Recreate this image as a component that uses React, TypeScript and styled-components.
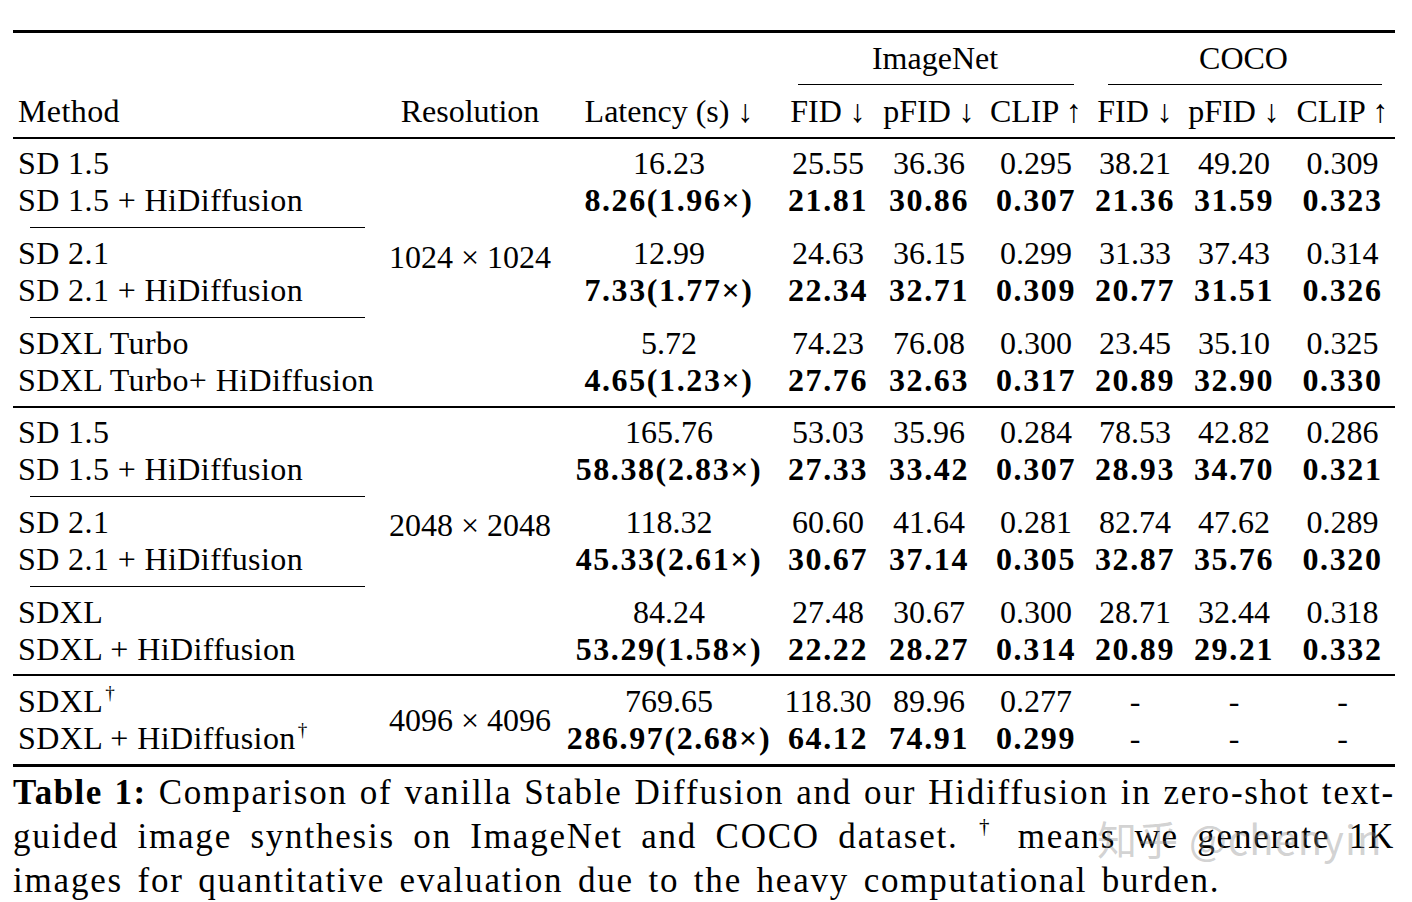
import React from 'react'
import styled, { createGlobalStyle } from 'styled-components'

const GlobalStyle = createGlobalStyle`
  body {
    margin: 0;
    background: #fff;
    color: #000;
    font-family: "Liberation Serif", "DejaVu Serif", serif;
  }
`

const COLS = '367px 180px 218px 100px 102px 112px 86px 112px 105px'

const Page = styled.main`
  position: relative;
  width: 1382px;
  margin: 30px 0 0 13px;
`

const Rule = styled.div<{ $weight: number }>`
  height: ${p => p.$weight}px;
  background: #000;
`

const Grid = styled.div<{ $top: number; $bottom: number; $rows: string }>`
  display: grid;
  grid-template-columns: ${COLS};
  grid-template-rows: ${p => p.$rows};
  padding: ${p => p.$top}px 0 ${p => p.$bottom}px;
  font-size: 32px;
  line-height: 37px;
`

const Cell = styled.div<{ $row: number; $col: number; $left?: boolean; $bold?: boolean }>`
  grid-row: ${p => p.$row};
  grid-column: ${p => p.$col};
  align-self: center;
  white-space: nowrap;
  text-align: ${p => (p.$left ? 'left' : 'center')};
  padding-left: ${p => (p.$left ? '5px' : '0')};
  font-weight: ${p => (p.$bold ? 700 : 400)};
  letter-spacing: ${p => (p.$bold ? '1.6px' : p.$left ? '0.4px' : '0')};
`

const GroupTitle = styled.div<{ $col: string }>`
  grid-row: 1;
  grid-column: ${p => p.$col};
  align-self: center;
  text-align: center;
  white-space: nowrap;
`

const Cmid = styled.div<{ $row: number; $col: string; $l: number; $r: number }>`
  grid-row: ${p => p.$row};
  grid-column: ${p => p.$col};
  display: flex;
  align-items: center;
  padding: 0 ${p => p.$r}px 0 ${p => p.$l}px;

  &::after {
    content: '';
    flex: 1;
    height: 1px;
    background: #000;
  }
`

const Resolution = styled.div<{ $rows: number; $lift: number }>`
  grid-column: 2;
  grid-row: 1 / span ${p => p.$rows};
  align-self: center;
  text-align: center;
  white-space: nowrap;
  padding-bottom: ${p => p.$lift * 2}px;
`

const Sup = styled.sup`
  font-size: 0.6em;
  line-height: 0;
  vertical-align: 0.7em;
  margin-left: 2px;
`

const Caption = styled.div`
  padding-top: 4px;
  font-size: 35px;
  line-height: 44px;
  letter-spacing: 1.8px;
`

const CaptionLine = styled.div<{ $last?: boolean }>`
  text-align: justify;
  text-align-last: ${p => (p.$last ? 'left' : 'justify')};
  word-spacing: ${p => (p.$last ? '4px' : '0')};
  white-space: nowrap;
`

const Label = styled.b`
  font-weight: 700;
  letter-spacing: 1.5px;
`

const Watermark = styled.div`
  position: absolute;
  left: 1084px;
  top: 786px;
  font-family: "Noto Sans CJK SC", "Noto Sans", sans-serif;
  font-size: 40px;
  line-height: 44px;
  color: rgba(140, 140, 140, 0.4);
  letter-spacing: 1px;
  pointer-events: none;
`

type Row = { name: React.ReactNode; vals: string[]; bold?: boolean }

type Section = { res: string; lift: number; groups: Row[][] }

const dag = <Sup>†</Sup>

const sections: Section[] = [
  {
    res: '1024 × 1024',
    lift: 15,
    groups: [
      [
        { name: 'SD 1.5', vals: ['16.23', '25.55', '36.36', '0.295', '38.21', '49.20', '0.309'] },
        { name: 'SD 1.5 + HiDiffusion', bold: true, vals: ['8.26(1.96×)', '21.81', '30.86', '0.307', '21.36', '31.59', '0.323'] },
      ],
      [
        { name: 'SD 2.1', vals: ['12.99', '24.63', '36.15', '0.299', '31.33', '37.43', '0.314'] },
        { name: 'SD 2.1 + HiDiffusion', bold: true, vals: ['7.33(1.77×)', '22.34', '32.71', '0.309', '20.77', '31.51', '0.326'] },
      ],
      [
        { name: 'SDXL Turbo', vals: ['5.72', '74.23', '76.08', '0.300', '23.45', '35.10', '0.325'] },
        { name: 'SDXL Turbo+ HiDiffusion', bold: true, vals: ['4.65(1.23×)', '27.76', '32.63', '0.317', '20.89', '32.90', '0.330'] },
      ],
    ],
  },
  {
    res: '2048 × 2048',
    lift: 16,
    groups: [
      [
        { name: 'SD 1.5', vals: ['165.76', '53.03', '35.96', '0.284', '78.53', '42.82', '0.286'] },
        { name: 'SD 1.5 + HiDiffusion', bold: true, vals: ['58.38(2.83×)', '27.33', '33.42', '0.307', '28.93', '34.70', '0.321'] },
      ],
      [
        { name: 'SD 2.1', vals: ['118.32', '60.60', '41.64', '0.281', '82.74', '47.62', '0.289'] },
        { name: 'SD 2.1 + HiDiffusion', bold: true, vals: ['45.33(2.61×)', '30.67', '37.14', '0.305', '32.87', '35.76', '0.320'] },
      ],
      [
        { name: 'SDXL', vals: ['84.24', '27.48', '30.67', '0.300', '28.71', '32.44', '0.318'] },
        { name: 'SDXL + HiDiffusion', bold: true, vals: ['53.29(1.58×)', '22.22', '28.27', '0.314', '20.89', '29.21', '0.332'] },
      ],
    ],
  },
  {
    res: '4096 × 4096',
    lift: 0,
    groups: [
      [
        { name: <>SDXL{dag}</>, vals: ['769.65', '118.30', '89.96', '0.277', '-', '-', '-'] },
        { name: <>SDXL + HiDiffusion{dag}</>, bold: true, vals: ['286.97(2.68×)', '64.12', '74.91', '0.299', '-', '-', '-'] },
      ],
    ],
  },
]

const headers = ['Resolution', 'Latency (s) ↓', 'FID ↓', 'pFID ↓', 'CLIP ↑', 'FID ↓', 'pFID ↓', 'CLIP ↑']

const Body = ({ section, top, bottom }: { section: Section; top: number; bottom: number }) => {
  const tracks = section.groups.map(() => '37px 37px').join(' 16px ')
  const count = section.groups.length * 3 - 1
  return (
    <Grid $top={top} $bottom={bottom} $rows={tracks}>
      {section.groups.map((g, gi) => {
        const base = gi * 3 + 1
        return (
          <React.Fragment key={gi}>
            {gi > 0 && <Cmid $row={base - 1} $col="1" $l={17} $r={15} />}
            {g.map((r, ri) => (
              <React.Fragment key={ri}>
                <Cell $row={base + ri} $col={1} $left>{r.name}</Cell>
                {r.vals.map((v, vi) => (
                  <Cell key={vi} $row={base + ri} $col={vi + 3} $bold={r.bold && v !== '-'}>
                    {v}
                  </Cell>
                ))}
              </React.Fragment>
            ))}
          </React.Fragment>
        )
      })}
      <Resolution $rows={count} $lift={section.lift}>{section.res}</Resolution>
    </Grid>
  )
}

const App = () => (
  <>
    <GlobalStyle />
    <Page>
      <Rule $weight={3} />
      <Grid $top={7} $bottom={8} $rows="36px 17px 36px">
        <GroupTitle $col="4 / 7">ImageNet</GroupTitle>
        <GroupTitle $col="7 / 10">COCO</GroupTitle>
        <Cmid $row={2} $col="4 / 7" $l={20} $r={18} />
        <Cmid $row={2} $col="7 / 10" $l={16} $r={13} />
        <Cell $row={3} $col={1} $left>Method</Cell>
        {headers.map((h, i) => (
          <Cell key={i} $row={3} $col={i + 2}>{h}</Cell>
        ))}
      </Grid>
      <Rule $weight={2} />
      <Body section={sections[0]} top={6} bottom={7} />
      <Rule $weight={2} />
      <Body section={sections[1]} top={6} bottom={6} />
      <Rule $weight={2} />
      <Body section={sections[2]} top={7} bottom={7} />
      <Rule $weight={3} />
      <Caption>
        <CaptionLine>
          <Label>Table 1:</Label> Comparison of vanilla Stable Diffusion and our Hidiffusion in zero-shot text-
        </CaptionLine>
        <CaptionLine>
          guided image synthesis on ImageNet and COCO dataset. <Sup>†</Sup> means we generate 1K
        </CaptionLine>
        <CaptionLine $last>images for quantitative evaluation due to the heavy computational burden.</CaptionLine>
      </Caption>
      <Watermark>知乎 @chenyin</Watermark>
    </Page>
  </>
)

export default App
